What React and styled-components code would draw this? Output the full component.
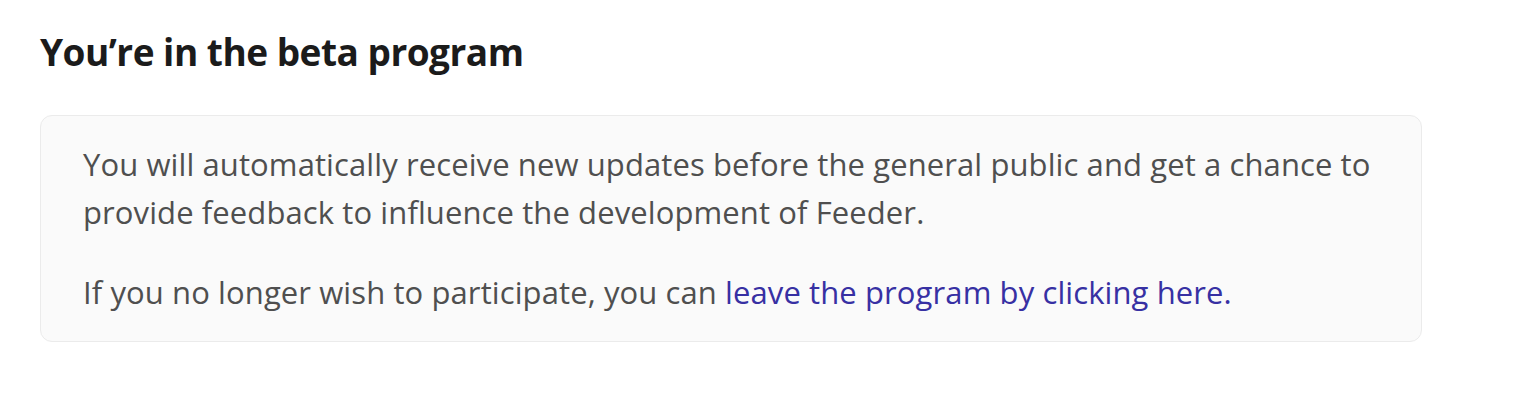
import React from "react"
import styled, { createGlobalStyle } from "styled-components"

const GlobalStyle = createGlobalStyle`
  html, body {
    margin: 0;
    padding: 0;
    background: #ffffff;
  }

  body {
    font-family: "Open Sans", "Noto Sans", sans-serif;
    -webkit-font-smoothing: antialiased;
  }
`

const Page = styled.main`
  width: 1382px;
  padding: 22px 0 0 40px;
`

const Title = styled.h2`
  margin: 0 0 33px;
  font-size: 37px;
  line-height: 60px;
  font-weight: 700;
  color: #1b1b1b;
  letter-spacing: -0.5px;
`

const Card = styled.section`
  box-sizing: border-box;
  width: 1382px;
  padding: 24px 42px 25px;
  background: #fafafa;
  border: 1px solid #ebebeb;
  border-radius: 12px;
`

const Text = styled.p`
  margin: 0;
  font-size: 31px;
  line-height: 48px;
  letter-spacing: 0.1px;
  color: #4f4f4f;

  & + & {
    margin-top: 32px;
  }
`

const LeaveLink = styled.a`
  color: #3730a3;
  text-decoration: none;
  cursor: pointer;
`

const App = () => {
  return (
    <>
      <GlobalStyle />
      <Page>
        <Title>You’re in the beta program</Title>
        <Card>
          <Text>
            You will automatically receive new updates before the general public and get a chance to
            provide feedback to influence the development of Feeder.
          </Text>
          <Text>
            If you no longer wish to participate, you can{" "}
            <LeaveLink href="#">leave the program by clicking here.</LeaveLink>
          </Text>
        </Card>
      </Page>
    </>
  )
}

export default App
